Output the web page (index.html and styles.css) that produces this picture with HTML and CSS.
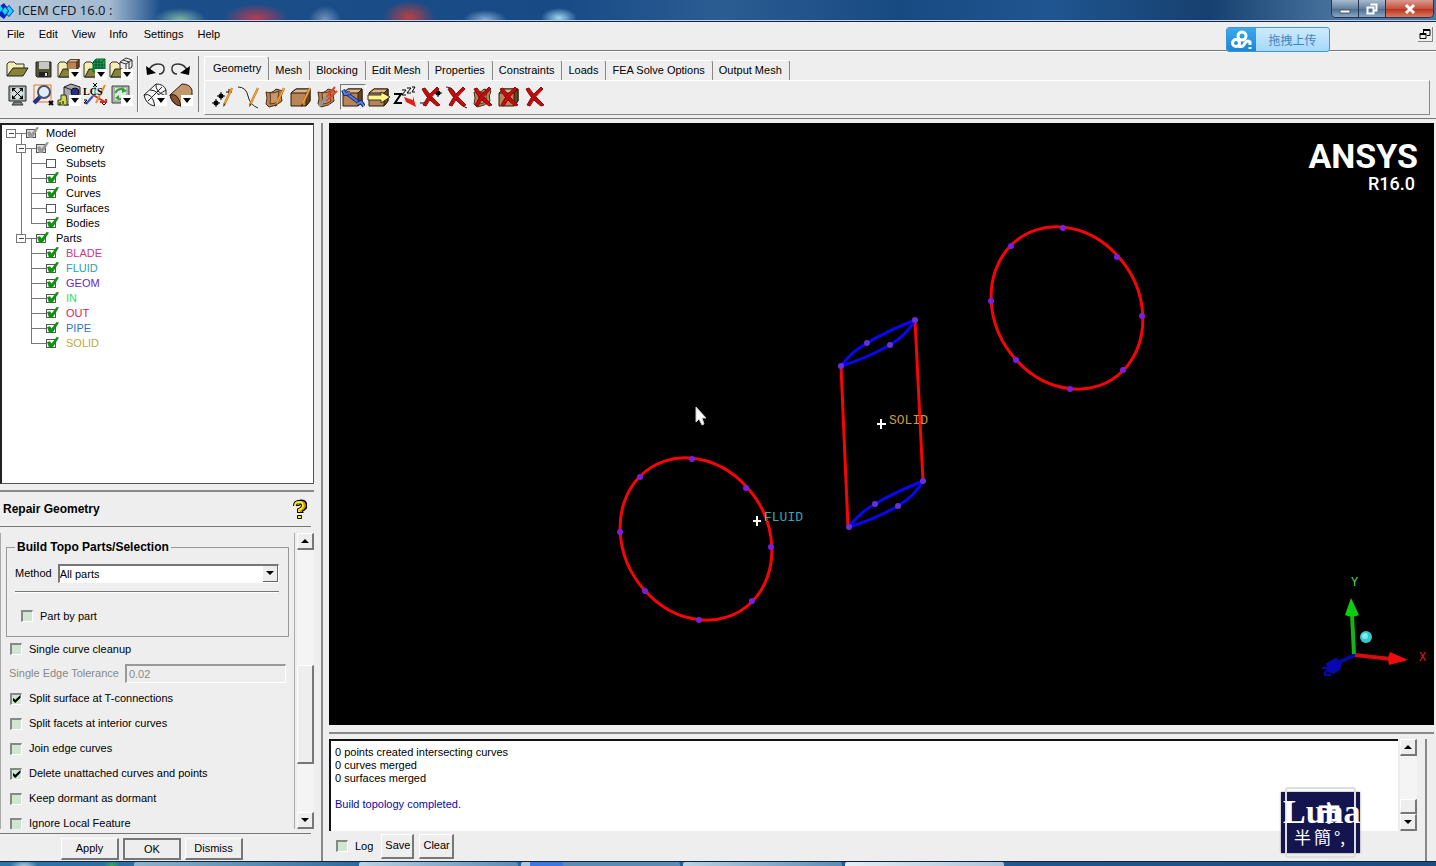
FILE: index.html
```html
<!DOCTYPE html>
<html lang="en">
<head>
    <meta charset="UTF-8">
    <meta name="viewport" content="width=device-width, initial-scale=1.0">
    <title>ICEM CFD 16.0</title>
    <link rel="stylesheet" href="styles.css">
</head>
<body>
    <!-- shared icon shapes -->
    <svg class="defs" aria-hidden="true">
        <defs>
            <symbol id="drop" viewBox="0 0 12 11"><path d="M0 0h12v11H0z" fill="#fff"/><path d="M2 3h8L6 8z"/></symbol>
            <symbol id="folder" viewBox="0 0 24 24"><path d="M2 19V7l2-2h5l2 2h8v4" fill="#f4efb0" stroke="#333"/><path d="M2 19l6-8h15l-5 8z" fill="#85843a" stroke="#222"/></symbol>
            <symbol id="backfolder" viewBox="0 0 24 24"><path d="M1 20V7l2-2h5l2 2h9v13z" fill="#f4efb0" stroke="#333"/><path d="M2 20l4-8h8v8z" fill="#85843a" stroke="#222"/></symbol>
            <symbol id="box" viewBox="0 0 24 24"><path d="M2 8l5-4h14v12l-4 5H2z" fill="#b98556" stroke="#2a1a0c"/><path d="M2 8h15l4-4H7z" fill="#dcb68c" stroke="#2a1a0c"/><path d="M17 8l4-4v12l-4 5z" fill="#6e4322" stroke="#2a1a0c"/></symbol>
            <symbol id="surf" viewBox="0 0 24 24"><path d="M3 7q6 2 10-3l7 2q-3 5-1 10-5 5-13 6l-3-3q2-6 0-12z" fill="#b98556" stroke="#4a2c14"/><path d="M7 8q6 0 9-2-2 7 0 10-4 3-9 3 1-6 0-11z" fill="#c89768" stroke="#5a3b20"/></symbol>
            <symbol id="pencil" viewBox="0 0 24 24"><path d="M21 3L13 20" stroke="#c97a16" stroke-width="2.4"/><path d="M21 3L14 18" stroke="#f5b04a"/><path d="M13 19l-1 3 2-2z"/></symbol>
            <symbol id="cross" viewBox="0 0 24 24"><path d="M3 4l3-1q5 8 15 17l-3 1Q8 14 3 4z" fill="#c40d0d" stroke="#900808"/><path d="M18 2l2 2Q12 11 7 21l-3-1Q9 9 18 2z" fill="#c40d0d" stroke="#900808"/></symbol>
        </defs>
    </svg>

    <header class="titlebar">
        <svg class="app-icon" viewBox="0 0 14 16"><path d="M0 3l4-3 3 4 2-2 5 6-5 6-2-2-3 4-4-3z" fill="#0b25b8"/><path d="M0 2l3 4-3 3zM5 4l3 4-3 4-3-4zM9 3l4 5-4 5-2-2 2-3-2-3z" fill="#19d8f5"/></svg>
        <span class="title">ICEM CFD 16.0 :</span>
        <div class="window-buttons">
            <button aria-label="Minimize"><svg width="12" height="12"><path d="M1 7h10v3H1z" fill="#fff" stroke="#4d5b70"/></svg></button>
            <button aria-label="Restore"><svg width="12" height="12"><path d="M4.500 1.500h6v6h-2M1.500 4.500h6v6h-6z" fill="none" stroke="#fff" stroke-width="2"/></svg></button>
            <button class="close" aria-label="Close"><svg width="12" height="12"><path d="M2 2l8 8M10 2l-8 8" stroke="#fff" stroke-width="3"/></svg></button>
        </div>
    </header>

    <nav class="menubar">
        <button>File</button>
        <button>Edit</button>
        <button>View</button>
        <button>Info</button>
        <button class="settings">Settings</button>
        <button>Help</button>
        <button class="restore" aria-label="Restore child window"><svg width="12" height="12" fill="none" stroke="#000"><path d="M4 1.500h7v6H8M1 5.500h6v5H1zM4 2.500h7M1 6.500h6M4.500 1v4"/></svg></button>
        <a class="upload" href="#">
            <span class="upload-icon"><svg width="22" height="20" fill="none" stroke="#fff" stroke-width="3"><circle cx="5" cy="13" r="3.500"/><circle cx="11" cy="6" r="4"/><path d="M7 16q5 2 7-3 2-3 5-1v3M19 17v2"/></svg></span>
            <span class="upload-text">拖拽上传</span>
        </a>
    </nav>

    <section class="toolbars">
        <div class="tools main-tools">
            <button aria-label="Open project"><svg viewBox="0 0 24 24"><use href="#folder"/></svg></button>
            <button aria-label="Save project"><svg viewBox="0 0 24 24"><path d="M5 5h15v15H6l-1-1z" fill="#555534" stroke="#222"/><path d="M8 5h10v7H8z" fill="#c8c8c4"/><path d="M8 15h9v5H8z" fill="#222"/><path d="M14 16h2v3h-2z" fill="#ddd"/></svg></button>
            <button aria-label="Open geometry"><svg viewBox="0 0 24 24"><use href="#backfolder"/><use href="#box" x="9" y="0" width="15" height="15"/><use href="#drop" x="12" y="12" width="12" height="11"/></svg></button>
            <button aria-label="Open mesh"><svg viewBox="0 0 24 24"><use href="#backfolder"/><path d="M10 5l3-3h9v10l-3 3h-9z" fill="#23a54a" stroke="#063"/><path d="M10 5h9v10M10 8h12M10 11h12M13 3v11M16 3v11M19 5l3-3" fill="none" stroke="#053"/><use href="#drop" x="12" y="12" width="12" height="11"/></svg></button>
            <button aria-label="Open blocking"><svg viewBox="0 0 24 24"><use href="#backfolder"/><path d="M11 5l6-4 6 2v7l-6 4-6-3zM11 5l6 2 6-4M17 7v7M14 3l6 2v7" fill="#eee" stroke="#333"/><use href="#drop" x="12" y="12" width="12" height="11"/></svg></button>
            <button aria-label="Fit window"><svg viewBox="0 0 24 24"><path d="M4 3h17v15H4z" fill="#a9b3b3" stroke="#222"/><path d="M9 19h7l2 3H7z" fill="#888" stroke="#333"/><path d="M6 5h13v11H6z" fill="#d7dddd"/><path d="M8 6l9 9M17 6l-9 9" stroke="#000"/><path d="M7 5h4L7 9zM18 5h-4l4 4zM7 16h4l-4-4zM18 16h-4l4-4z"/></svg></button>
            <button aria-label="Box zoom"><svg viewBox="0 0 24 24"><path d="M3 2h17v17H3z" fill="none" stroke="#e67821"/><path d="M9 14l-6 6" stroke="#1e2f93" stroke-width="4"/><circle cx="13" cy="9" r="6" fill="#dfeefa" stroke="#4b5168" stroke-width="2"/><path d="M18 18l4 4M22 18l-4 4" stroke="#000" stroke-width="2"/></svg></button>
            <button aria-label="Measure distance"><svg viewBox="0 0 24 24"><path d="M7 4l7-3 9 3v15l-6 3H7z" fill="#a8a8b0" stroke="#222"/><path d="M7 4l8 3v14" fill="none" stroke="#222"/><circle cx="18" cy="9" r="4" fill="#282c88" stroke="#111"/><path d="M9 12H4v5H1v5h9v-4z" fill="#cfdb42" stroke="#333"/><path d="M3 19v3M6 18v3" stroke="#000"/><use href="#drop" x="12" y="12" width="12" height="11"/></svg></button>
            <button aria-label="Local coordinate system"><svg viewBox="0 0 24 24"><path d="M10 13L3 21" stroke="#3d4cce" stroke-width="2"/><path d="M10 12l12 7M17 19h6v-3" fill="none" stroke="#d42727" stroke-width="2"/><path d="M12 12V3" stroke="#189c42" stroke-width="1"/><path d="M22 2l-9 18" stroke="#e09327" stroke-width="2"/><path d="M10 0l4 4M14 0l-4 4M1 17h3l-3 3h3M19 20l2 2 2-2" fill="none" stroke="#000"/><text class="lcs" x="0" y="12">LCS</text></svg></button>
            <button aria-label="Refresh"><svg viewBox="0 0 24 24"><path d="M3 3h17v17H3z" fill="#aeb4b4" stroke="#444"/><path d="M6 5h11v12H6z" fill="#e2e6e2"/><path d="M6 10q4-6 9-3M17 12q-3 6-9 3" fill="none" stroke="#35a02f" stroke-width="2"/><path d="M13 4l5 4-5 2zM6 15l4-3v5z" fill="#35a02f"/><use href="#drop" x="12" y="12" width="12" height="11"/></svg></button>
        </div>
        <div class="tools view-tools">
            <button aria-label="Undo"><svg viewBox="0 0 24 24"><path d="M5 15q3-8 10-8 7 0 6 6-1 4-5 4" fill="none" stroke="#333" stroke-width="1.500"/><path d="M3 9l1 9 9-2z"/></svg></button>
            <button aria-label="Redo"><svg viewBox="0 0 24 24"><path d="M19 15q-3-8-10-8-7 0-6 6 1 4 5 4" fill="none" stroke="#333" stroke-width="1.500"/><path d="M21 9l-1 9-9-2z"/></svg></button>
            <button aria-label="Wire frame"><svg viewBox="0 0 24 24"><path d="M1 12L13 1q8 0 10 6v6l-11 10Q3 22 1 12z" fill="#f4f4f4" stroke="#222"/><path d="M1 12q8-3 11 11M7 7q9 0 11 11M13 1q-1 8 10 12M5 18L19 4M12 14l11-7" fill="none" stroke="#222"/><use href="#drop" x="12" y="12" width="12" height="11"/></svg></button>
            <button aria-label="Solid display"><svg viewBox="0 0 24 24"><path d="M1 12L13 1q8 0 10 6v6l-11 10Q3 22 1 12z" fill="#c2956b" stroke="#2a1a0c"/><path d="M1 12q8-3 11 11Q3 22 1 12z" fill="#855330" stroke="#2a1a0c"/><use href="#drop" x="12" y="12" width="12" height="11"/></svg></button>
        </div>
        <div class="function-area">
            <div class="tabs">
                <button class="tab active">Geometry</button>
                <button class="tab">Mesh</button>
                <button class="tab">Blocking</button>
                <button class="tab">Edit Mesh</button>
                <button class="tab">Properties</button>
                <button class="tab">Constraints</button>
                <button class="tab">Loads</button>
                <button class="tab">FEA Solve Options</button>
                <button class="tab">Output Mesh</button>
            </div>
            <div class="tab-page">
                <button aria-label="Create point"><svg viewBox="0 0 24 24"><path d="M5 14v8M1 18h8M10 7v8M6 11h8M18 4v6M15 7h6" stroke="#000"/><circle cx="5" cy="18" r="2.500"/><circle cx="10" cy="11" r="2.500"/><use href="#pencil"/></svg></button>
                <button aria-label="Create curve"><svg viewBox="0 0 24 24"><path d="M1 2q8 0 10 9t10 12" fill="none" stroke="#222"/><use href="#pencil"/></svg></button>
                <button aria-label="Create surface"><svg viewBox="0 0 24 24"><use href="#surf"/><use href="#pencil"/></svg></button>
                <button aria-label="Create body"><svg viewBox="0 0 24 24"><use href="#box"/><use href="#pencil"/></svg></button>
                <button aria-label="Create faceted"><svg viewBox="0 0 24 24"><use href="#surf"/><path d="M20 2L9 15M22 6L11 16" stroke="#df4a26" stroke-width="2"/><path d="M4 21l8-9" stroke="#8b95a2" stroke-width="3"/></svg></button>
                <button class="pressed" aria-label="Repair geometry"><svg viewBox="0 0 24 24"><use href="#box"/><path d="M5 8l15 11" stroke="#132e73" stroke-width="4"/><path d="M5 8l15 11" stroke="#5a82d6" stroke-width="2"/><path d="M2 5l2 4 5-1M23 21l-3-4-4 2" fill="none" stroke="#132e73" stroke-width="4"/><path d="M2 5l2 4 5-1M23 21l-3-4-4 2" fill="none" stroke="#5a82d6" stroke-width="2"/></svg></button>
                <button aria-label="Transform geometry"><svg viewBox="0 0 24 24"><use href="#box"/><path d="M1 10h13V7l9 5-9 6v-3H1z" fill="#fff681" stroke="#333"/></svg></button>
                <button aria-label="Restore dormant"><svg viewBox="0 0 24 24"><path d="M1 9h7l-6 9h7" fill="none" stroke="#000" stroke-width="2"/><path d="M9 5h4l-4 5h4M14 3h4l-4 5h4M19 2h3l-3 5h3" fill="none" stroke="#000"/><path d="M11 12l9 3v-4l3 11-10-5z" fill="#d22"/></svg></button>
                <button aria-label="Delete point"><svg viewBox="0 0 24 24"><path d="M15 8h8M19 4v8M1 18h4" stroke="#000"/><circle cx="19" cy="8" r="2.500"/><use href="#cross"/></svg></button>
                <button aria-label="Delete curve"><svg viewBox="0 0 24 24"><path d="M1 2q8 0 10 9t11 12" fill="none" stroke="#222"/><use href="#cross"/></svg></button>
                <button aria-label="Delete surface"><svg viewBox="0 0 24 24"><use href="#surf"/><use href="#cross"/></svg></button>
                <button aria-label="Delete body"><svg viewBox="0 0 24 24"><use href="#box"/><use href="#cross"/></svg></button>
                <button aria-label="Delete any entity"><svg viewBox="0 0 24 24"><use href="#cross"/></svg></button>
            </div>
        </div>
    </section>

    <main class="workspace">
        <aside class="left-panel">
            <div class="tree">
                <ul>
                    <li>
                        <div class="row"><button class="expander" aria-label="Collapse Model"></button><input class="tree-check partial" type="checkbox" id="model" checked><label for="model">Model</label></div>
                        <ul>
                            <li>
                                <div class="row"><button class="expander" aria-label="Collapse Geometry"></button><input class="tree-check partial" type="checkbox" id="geometry" checked><label for="geometry">Geometry</label></div>
                                <ul>
                                    <li class="row"><input class="tree-check" type="checkbox" id="subsets"><label for="subsets">Subsets</label></li>
                                    <li class="row"><input class="tree-check" type="checkbox" id="points" checked><label for="points">Points</label></li>
                                    <li class="row"><input class="tree-check" type="checkbox" id="curves" checked><label for="curves">Curves</label></li>
                                    <li class="row"><input class="tree-check" type="checkbox" id="surfaces"><label for="surfaces">Surfaces</label></li>
                                    <li class="row"><input class="tree-check" type="checkbox" id="bodies" checked><label for="bodies">Bodies</label></li>
                                </ul>
                            </li>
                            <li>
                                <div class="row"><button class="expander" aria-label="Collapse Parts"></button><input class="tree-check" type="checkbox" id="parts" checked><label for="parts">Parts</label></div>
                                <ul>
                                    <li class="row blade"><input class="tree-check" type="checkbox" id="blade" checked><label for="blade">BLADE</label></li>
                                    <li class="row fluid"><input class="tree-check" type="checkbox" id="fluid" checked><label for="fluid">FLUID</label></li>
                                    <li class="row geom"><input class="tree-check" type="checkbox" id="geom" checked><label for="geom">GEOM</label></li>
                                    <li class="row in"><input class="tree-check" type="checkbox" id="in" checked><label for="in">IN</label></li>
                                    <li class="row out"><input class="tree-check" type="checkbox" id="out" checked><label for="out">OUT</label></li>
                                    <li class="row pipe"><input class="tree-check" type="checkbox" id="pipe" checked><label for="pipe">PIPE</label></li>
                                    <li class="row solid"><input class="tree-check" type="checkbox" id="solid" checked><label for="solid">SOLID</label></li>
                                </ul>
                            </li>
                        </ul>
                    </li>
                </ul>
            </div>
            <div class="sash"></div>
            <div class="panel-header">
                <h2>Repair Geometry</h2>
                <button aria-label="Help"><svg width="14" height="20" fill="none"><path d="M4 7q0-4 4-4t4 4q0 2-4 4v3" stroke="#000" stroke-width="5"/><path d="M2 7q0-4 4-4t4 4q0 2-4 4v3" stroke="#000" stroke-width="4"/><path d="M5 6q1-3 3-3 4 0 4 4 0 2-4 4v2" stroke="#c98f1c" stroke-width="2"/><path d="M2 7q0-4 4-4t4 4q0 2-4 4v2" stroke="#ffee16" stroke-width="2"/><path d="M4.500 16.500h4v3h-4z" fill="#ffee16" stroke="#000"/></svg></button>
            </div>
            <div class="options">
                <div class="options-body">
                    <fieldset>
                        <legend>Build Topo Parts/Selection</legend>
                        <div class="method">
                            <label for="method">Method</label>
                            <div class="combo">
                                <select id="method"><option>All parts</option></select>
                                <span class="combo-arrow"></span>
                            </div>
                        </div>
                        <hr>
                        <div class="option inset"><input type="checkbox" id="partbypart"><label for="partbypart">Part by part</label></div>
                    </fieldset>
                    <div class="option first"><input type="checkbox" id="cleanup"><label for="cleanup">Single curve cleanup</label></div>
                    <div class="tolerance">
                        <label for="tolerance">Single Edge Tolerance</label>
                        <input type="text" id="tolerance" value="0.02" disabled>
                    </div>
                    <div class="option"><input type="checkbox" id="splitsurf" checked><label for="splitsurf">Split surface at T-connections</label></div>
                    <div class="option"><input type="checkbox" id="splitfacets"><label for="splitfacets">Split facets at interior curves</label></div>
                    <div class="option"><input type="checkbox" id="join"><label for="join">Join edge curves</label></div>
                    <div class="option"><input type="checkbox" id="delete" checked><label for="delete">Delete unattached curves and points</label></div>
                    <div class="option"><input type="checkbox" id="dormant"><label for="dormant">Keep dormant as dormant</label></div>
                    <div class="option"><input type="checkbox" id="ignore"><label for="ignore">Ignore Local Feature</label></div>
                </div>
                <div class="scrollbar options-scroll">
                    <button class="up" aria-label="Scroll up"></button>
                    <div class="thumb"></div>
                    <button class="down" aria-label="Scroll down"></button>
                </div>
            </div>
            <div class="panel-buttons">
                <button>Apply</button>
                <button class="default">OK</button>
                <button>Dismiss</button>
            </div>
        </aside>

        <section class="right-panel">
            <svg class="viewport" viewBox="329 123 1105 602" preserveAspectRatio="xMidYMid slice">
                <defs>
                    <g id="ring">
                        <circle r="1" transform="matrix(75.800 7.500 3.700 80.800 696 539)" vector-effect="non-scaling-stroke" fill="none" stroke="#f80408" stroke-width="3"/>
                        <g fill="#7a1ee0">
                            <circle cx="692" cy="459" r="3"/><circle cx="746" cy="488" r="3"/><circle cx="771" cy="547" r="3"/><circle cx="752" cy="601" r="3"/>
                            <circle cx="699" cy="620" r="3"/><circle cx="645" cy="591" r="3"/><circle cx="620" cy="532" r="3"/><circle cx="640" cy="477" r="3"/>
                        </g>
                    </g>
                    <g id="profile">
                        <path d="M841 366C849 355 858 348 867 343C882 334 900 326 915 320M841 366C858 361 874 354 890 345C900 339 909 331 915 320" fill="none" stroke="#0a06f0" stroke-width="3"/>
                        <g fill="#6432d8">
                            <circle cx="841" cy="366" r="3"/><circle cx="867" cy="343" r="3"/><circle cx="890" cy="345" r="3"/><circle cx="915" cy="320" r="3"/>
                        </g>
                    </g>
                </defs>
                <rect x="329" y="123" width="1105" height="602"/>
                <text class="brand" x="1418" y="168">ANSYS</text>
                <text class="release" x="1415" y="190">R16.0</text>

                <use href="#ring"/>
                <use href="#ring" x="371" y="-231"/>
                <path d="M841 366L848 527M915 320L923 481" stroke="#f80408" stroke-width="3"/>
                <use href="#profile"/>
                <use href="#profile" x="8" y="161"/>

                <path d="M757 516v10M753 521h8M881 419v10M877 424h9" stroke="#fff" stroke-width="2"/>
                <text class="body-label" x="764" y="521" fill="#3fa5ac">FLUID</text>
                <text class="body-label" x="889" y="424" fill="#c89b4b">SOLID</text>

                <!-- cursor -->
                <path d="M696 407v15l3-3 3 6 2-1-2-6h4z" fill="#fff" stroke="#ccc"/>

                <!-- axis triad -->
                <path d="M1355 655L1333 665" stroke="#0808a0" stroke-width="4"/>
                <path d="M1327 664l9-5 5 4-2 6-6 4-4-2zM1322 668h7M1324 675h7M1330 667l-6 7" fill="#0808b0" stroke="#0808b0" stroke-width="2"/>
                <path d="M1354 654l-2-40" stroke="#14b414" stroke-width="4"/>
                <path d="M1351 598l8 17q-7 3-14 0z" fill="#10cc10"/>
                <path d="M1355 655l36 4" stroke="#d60c0c" stroke-width="4"/>
                <path d="M1390 652l18 8-19 5q-2-7 1-13z" fill="#ee0c0c"/>
                <circle cx="1366" cy="637" r="6" fill="#35c8c8"/>
                <circle cx="1365" cy="636" r="3" fill="#7ceeee"/>
                <text class="axis" x="1351" y="586" fill="#54dc44">Y</text>
                <text class="axis" x="1419" y="661" fill="#e01c24">X</text>
            </svg>
            <div class="sash"></div>
            <div class="messages">
                <div class="log">
                    <p>0 points created intersecting curves</p>
                    <p>0 curves merged</p>
                    <p>0 surfaces merged</p>
                    <p class="done">Build topology completed.</p>
                </div>
                <div class="scrollbar log-scroll">
                    <button class="up" aria-label="Scroll up"></button>
                    <div class="thumb"></div>
                    <button class="down" aria-label="Scroll down"></button>
                </div>
                <div class="edge"></div>
            </div>
            <div class="log-tools">
                <input type="checkbox" id="log"><label for="log">Log</label>
                <button>Save</button>
                <button>Clear</button>
                <span class="edge"></span>
            </div>
            <div class="watermark">
                <span class="mark-name">Luna</span>
                <span class="mark-over">市</span>
                <span class="mark-sub"><b>半</b><b>簡</b><b>°,</b></span>
            </div>
        </section>
    </main>

    <footer class="taskbar">
        <span class="start"></span>
        <span class="task quick"></span>
        <span class="task"></span>
        <span class="task blue"></span>
        <span class="task"></span>
        <span class="task light"></span>
        <span class="tray"></span>
    </footer>
</body>
</html>
```

FILE: styles.css
```css
* {
    box-sizing: border-box;
}
body {
    margin: 0;
    min-height: 100vh;
    display: flex;
    flex-direction: column;
    background-color: #eeeeee;
    color: #000;
    font-family: 'Liberation Sans', Arial, sans-serif;
    font-size: 11px;
    line-height: 15px;
}
button, input, select {
    font: inherit;
    color: inherit;
    margin: 0;
    padding: 0;
    border: 0;
    border-radius: 0;
    background: none;
}
svg {
    display: block;
}
ul, p {
    margin: 0;
    padding: 0;
    list-style: none;
}
.defs {
    position: absolute;
    width: 0;
    height: 0;
}

/* title bar */
.titlebar {
    display: flex;
    align-items: center;
    height: 22px;
    border-bottom: 1px solid #12264a;
    box-shadow: inset 0 -1px #c4d4e6;
    background:
        radial-gradient(ellipse 26px 12px at 180px 20px, #7fb8a4, transparent),
        radial-gradient(ellipse 32px 14px at 256px 18px, #b83a50, transparent),
        radial-gradient(ellipse 16px 14px at 325px 20px, #7496bb, transparent),
        radial-gradient(ellipse 26px 16px at 409px 17px, #b93f43, transparent),
        radial-gradient(ellipse 22px 10px at 485px 20px, #88aed4, transparent),
        radial-gradient(ellipse 18px 10px at 559px 18px, #a0d8ee, transparent),
        linear-gradient(to right, #b6c7d9 0, #a3bad0 110px, #1c4f8a 160px, #184a86 560px, #2b5c92 720px, #184a82 900px, #1f5590 1050px, #16406f 1210px, #4a74a0 1340px);
}
.app-icon {
    width: 14px;
    height: 16px;
}
.title {
    flex: 1;
    margin-left: 4px;
    font-family: 'Open Sans', 'Noto Sans', sans-serif;
    font-size: 13px;
    color: #0b1626;
}
.window-buttons {
    display: flex;
    align-self: flex-start;
    height: 18px;
    margin-right: 2px;
    border: 1px solid #24344c;
    border-top: 0;
    border-radius: 0 0 5px 5px;
    overflow: hidden;
}
.window-buttons button {
    display: grid;
    place-items: center;
    width: 27px;
    border-right: 1px solid #24344c;
    background: linear-gradient(#a9bacd, #6682a0 50%, #4a6a8c 51%, #8aa6c4);
}
.window-buttons .close {
    width: 47px;
    border-right: 0;
    background: linear-gradient(#d99a90, #c8513f 50%, #b3301c 51%, #dc7b5e);
}

/* menu */
.menubar {
    position: relative;
    display: flex;
    align-items: center;
    gap: 14px;
    height: 29px;
    padding: 0 3px 3px 7px;
    border-bottom: 1px solid #777;
}
.menubar .settings {
    margin-left: 2px;
}
.menubar .restore {
    display: grid;
    place-items: center;
    width: 15px;
    height: 15px;
    margin-left: auto;
    border-right: 1px solid #888;
    border-bottom: 1px solid #888;
}
.upload {
    position: absolute;
    right: 106px;
    top: 5px;
    display: flex;
    width: 104px;
    height: 25px;
    border: 1px solid #3f96d4;
    border-radius: 3px;
    overflow: hidden;
    background: linear-gradient(#cdeafd, #a4d9fb);
    color: #4583ba;
    text-decoration: none;
}
.upload-icon {
    display: grid;
    place-items: center;
    width: 29px;
    background: linear-gradient(#3aa9ee, #1b86d8);
}
.upload-text {
    flex: 1;
    text-align: center;
    font-family: 'Noto Sans CJK SC', sans-serif;
    font-size: 12px;
    line-height: 24px;
}

/* toolbars */
.toolbars {
    display: flex;
    height: 68px;
    padding-top: 4px;
    border-top: 1px solid #fff;
    border-bottom: 1px solid #777;
}
.tools {
    display: grid;
    grid-auto-rows: 26px;
    height: 56px;
    border-right: 1px solid #777;
}
.tools button, .tab-page button {
    display: grid;
    place-items: center;
    width: 26px;
    height: 26px;
}
.tools svg, .tab-page svg {
    width: 24px;
    height: 24px;
}
.main-tools {
    grid-template-columns: repeat(5, 26px);
    padding-left: 4px;
    width: 138px;
}
.view-tools {
    grid-template-columns: repeat(2, 26px);
    padding-left: 4px;
    width: 61px;
    box-shadow: inset 1px 0 #fff;
}
.lcs {
    font: bold 10px 'Liberation Serif', serif;
}
.function-area {
    flex: 1;
    min-width: 0;
    margin: 0 6px 0 5px;
}
.tabs {
    display: flex;
    align-items: flex-end;
    height: 24px;
}
.tab {
    height: 20px;
    padding: 0 7px 0 6px;
    border-top: 1px solid #fff;
    border-right: 1px solid #888;
    border-top-right-radius: 3px;
}
.tab.active {
    height: 24px;
    padding: 0 7px 0 8px;
    border-left: 1px solid #fff;
}
.tab-page {
    display: flex;
    align-items: center;
    height: 35px;
    padding: 0 0 2px 5px;
    border: 1px solid #fff;
    border-right-color: #888;
    border-bottom-color: #888;
}
.tab-page .pressed {
    border: 1px solid #fff;
    border-top-color: #777;
    border-left-color: #777;
}

/* workspace */
.workspace {
    flex: 1;
    display: flex;
    min-height: 0;
    padding-top: 4px;
}
.left-panel {
    display: flex;
    flex-direction: column;
    width: 323px;
    padding-right: 7px;
    border-right: 2px solid #888;
}
.sash {
    flex: none;
    height: 6px;
    margin-top: 2px;
    border-bottom: 2px solid #888;
}

/* model tree */
.tree {
    flex: 1;
    padding: 1px 0 0 4px;
    background-color: #fff;
    border: 2px solid #222;
    border-right: 1px solid #555;
    border-bottom: 1px solid #555;
}
.tree ul ul {
    margin-left: 10px;
}
.tree li {
    position: relative;
}
.tree .row {
    display: flex;
    align-items: center;
    height: 15px;
}
.tree ul ul > li::before {
    content: '';
    position: absolute;
    left: 5px;
    top: -7px;
    bottom: 0;
    border-left: 1px solid #777;
}
.tree ul ul > li:last-child::before {
    bottom: auto;
    height: 15px;
}
.tree li.row::after {
    content: '';
    order: -1;
    width: 15px;
    margin-left: 5px;
    border-top: 1px solid #777;
}
.expander {
    position: relative;
    width: 10px;
    height: 9px;
    border: 1px solid #777;
    background: linear-gradient(#444, #444) center / 5px 1px no-repeat #fff;
}
.expander + .tree-check {
    margin-left: 10px;
}
.expander + .tree-check::before {
    content: '';
    position: absolute;
    left: -11px;
    top: 3px;
    width: 10px;
    border-top: 1px solid #777;
}
.tree-check {
    appearance: none;
    position: relative;
    width: 10px;
    height: 9px;
    margin-right: 10px;
    border: 1px solid #555;
    background-color: #fff;
}
.tree-check:checked::after {
    content: '';
    position: absolute;
    left: 0;
    top: -3px;
    width: 12px;
    height: 11px;
    background-color: #109010;
    clip-path: polygon(0 45%, 25% 38%, 38% 60%, 80% 0, 100% 5%, 45% 100%, 18% 100%);
}
.tree-check.partial {
    background-color: #ddd;
}
.tree-check.partial:checked::after {
    background-color: #999;
}
.blade { color: #cc3886; }
.fluid { color: #2ba0aa; }
.geom { color: #6426c8; }
.in { color: #3ed85c; }
.out { color: #d42454; }
.pipe { color: #2c74c8; }
.solid { color: #bfa63c; }

/* repair geometry panel */
.panel-header {
    display: flex;
    align-items: center;
    justify-content: space-between;
    height: 35px;
    margin-right: 3px;
    padding: 0 4px 0 3px;
    border-bottom: 1px solid #777;
}
.panel-header h2, legend {
    margin: 0;
    font-size: 12px;
    font-weight: bold;
}
.options {
    display: flex;
    height: 296px;
    margin-top: 6px;
    overflow: hidden;
}
.options-body {
    flex: 1;
    padding: 7px 6px 0 5px;
    border-left: 1px solid #aaa;
    border-right: 1px solid #aaa;
}
fieldset {
    height: 97px;
    margin: 0 -1px 0 0;
    padding: 9px 9px 0 8px;
    border: 1px solid #999;
}
legend {
    padding: 0 2px;
}
.method {
    display: flex;
    align-items: center;
    gap: 6px;
}
.combo {
    position: relative;
    flex: 1;
    border: 1px solid #fff;
    border-top: 2px solid #777;
    border-left: 2px solid #777;
}
.combo select {
    appearance: none;
    display: block;
    width: 100%;
    height: 16px;
    background-color: #fff;
}
.combo-arrow {
    position: absolute;
    right: 0;
    top: 0;
    width: 15px;
    height: 16px;
    border-right: 1px solid #666;
    border-bottom: 1px solid #666;
    background-color: #eee;
    pointer-events: none;
}
.combo-arrow::after, .scrollbar button::after {
    content: '';
    display: block;
    width: 8px;
    height: 4px;
    margin: 5px auto;
    background-color: #000;
    clip-path: polygon(0 0, 100% 0, 50% 100%);
}
hr {
    margin: 8px 0 14px;
    border: 0;
    border-top: 1px solid #777;
    border-bottom: 1px solid #fff;
}
.option {
    display: flex;
    align-items: center;
    height: 25px;
    padding-left: 4px;
}
.option.first {
    height: 24px;
}
.option.inset {
    height: 18px;
    padding-left: 6px;
}
.option input, .log-tools input {
    appearance: none;
    display: grid;
    place-items: center;
    width: 12px;
    height: 12px;
    margin-right: 7px;
    border: 1px solid #fff;
    border-top: 2px solid #888;
    border-left: 2px solid #888;
    background-color: #cfe6d2;
}
.option input:checked::after {
    content: '';
    width: 8px;
    height: 8px;
    background-color: #000;
    clip-path: polygon(0 30%, 35% 60%, 100% 0, 100% 35%, 35% 100%, 0 65%);
}
.tolerance {
    display: flex;
    align-items: center;
    gap: 6px;
    height: 25px;
    margin: 0 2px 0 3px;
    color: #888;
}
.tolerance input {
    flex: 1;
    min-width: 0;
    height: 19px;
    padding-left: 2px;
    border: 1px solid #fff;
    border-top: 2px solid #999;
    border-left: 2px solid #999;
}
.scrollbar {
    display: flex;
    flex-direction: column;
    width: 17px;
    background-color: #f4f4f4;
}
.scrollbar button, .scrollbar .thumb {
    flex: none;
    height: 17px;
    border: 1px solid #fff;
    border-right: 2px solid #777;
    border-bottom: 2px solid #777;
    background-color: #eee;
}
.scrollbar .up::after {
    clip-path: polygon(0 100%, 100% 100%, 50% 0);
}
.options-scroll {
    margin-left: 2px;
}
.options-scroll .thumb {
    height: 99px;
    margin: auto 0 48px;
}
.panel-buttons {
    display: flex;
    align-items: flex-end;
    gap: 4px;
    height: 28px;
    margin: 4px 3px 0 0;
    padding: 0 0 1px 61px;
    border-top: 1px solid #777;
}
.panel-buttons button {
    width: 58px;
    height: 22px;
    border: 1px solid #fff;
    border-right: 2px solid #777;
    border-bottom: 2px solid #777;
}
.panel-buttons .default {
    border: 2px solid #777;
}

/* graphics window */
.right-panel {
    position: relative;
    flex: 1;
    min-width: 0;
    display: flex;
    flex-direction: column;
    padding: 0 2px 0 6px;
}
.viewport {
    flex: 1;
    width: 100%;
    min-height: 0;
    background-color: #000;
}
.brand {
    font-family: Roboto, sans-serif;
    font-size: 34px;
    font-weight: bold;
    text-anchor: end;
    fill: #fff;
}
.release {
    font-family: Roboto, sans-serif;
    font-size: 18px;
    font-weight: 500;
    text-anchor: end;
    fill: #fff;
}
.body-label {
    font-family: 'Liberation Mono', monospace;
    font-size: 13px;
}
.axis {
    font-family: 'Liberation Mono', monospace;
    font-size: 12px;
}

/* message window */
.right-panel .sash {
    height: 9px;
    margin-top: 0;
}
.messages {
    display: flex;
    height: 92px;
    margin-top: 5px;
}
.log {
    flex: 1;
    padding: 5px 4px;
    line-height: 13px;
    background-color: #fff;
    border-top: 2px solid #111;
    border-left: 2px solid #111;
}
.log .done {
    margin-top: 13px;
    color: #0808a8;
}
.log-scroll {
    margin: 0 8px 0 2px;
}
.log-scroll .thumb {
    height: 15px;
    margin-top: auto;
}
.edge {
    width: 9px;
    border-left: 2px solid #888;
}
.log-tools {
    display: flex;
    align-items: center;
    height: 30px;
    padding-left: 7px;
}
.log-tools button {
    height: 25px;
    padding: 0 2px 0 3px;
    margin-left: 8px;
    border: 1px solid #fff;
    border-right: 2px solid #777;
    border-bottom: 2px solid #777;
}
.log-tools button + button {
    margin-left: 5px;
}
.log-tools .edge {
    height: 30px;
    margin-left: auto;
}
.watermark {
    position: absolute;
    right: 76px;
    bottom: 8px;
    width: 79px;
    height: 61px;
    background-color: #14144f;
    color: #fff;
    box-shadow: 0 0 2px #888;
}
.watermark::before {
    content: '';
    position: absolute;
    inset: -5px 4px;
    border: 2px solid #ddd;
    border-radius: 3px;
}
.watermark span {
    position: absolute;
    left: 2px;
}
.mark-name {
    top: 4px;
    font: bold 34px/32px 'Liberation Serif', serif;
}
.watermark .mark-over {
    left: 37px;
    top: 6px;
    font: bold 22px/26px 'Noto Sans CJK SC', sans-serif;
}
.watermark .mark-sub {
    display: flex;
    gap: 3px;
    left: 13px;
    top: 35px;
    font: 17px/20px 'Noto Sans CJK TC', sans-serif;
}
.mark-sub b {
    font-weight: normal;
}

/* taskbar */
.taskbar {
    display: flex;
    height: 5px;
    border-top: 1px solid #10233c;
    background: linear-gradient(to right, #2d74a8, #1c4c84);
}
.start {
    width: 134px;
    background: radial-gradient(ellipse 14px 8px at 24px 5px, #b5d6e8, transparent), radial-gradient(circle 8px at 112px 5px, #38b050, transparent);
}
.task {
    width: 159px;
    margin-right: 3px;
    border-radius: 2px 2px 0 0;
    background: linear-gradient(to right, #b8d3e4, #5a8cb6);
}
.task.quick {
    width: 222px;
    background: linear-gradient(to right, #8cb4cc, #2d6c9f);
}
.task.blue {
    background: linear-gradient(to right, #a8c8e0 9px, #3d78e0 9px, #3d78e0 42px, #5a8cb6 42px);
}
.task.light {
    background: linear-gradient(to right, #e4eff6, #a9c4da);
}
.tray {
    flex: 1;
}
```
